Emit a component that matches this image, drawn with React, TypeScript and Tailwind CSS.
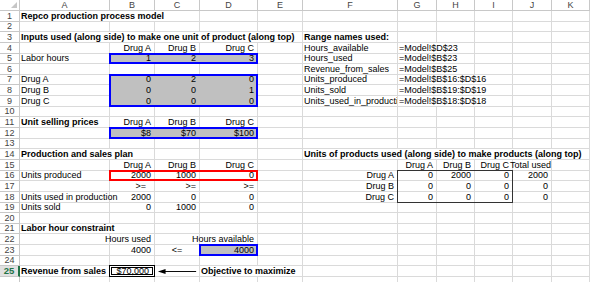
import type { ReactNode } from 'react'

type Cell = {
  t?: string
  a?: 'l' | 'r' | 'c'
  b?: boolean
  g?: boolean
  s?: number
  clip?: boolean
  pad?: string
  node?: ReactNode
}

const COLS = ['A', 'B', 'C', 'D', 'E', 'F', 'G', 'H', 'I', 'J', 'K']

const spanClass: Record<number, string> = {
  1: '',
  2: 'col-span-2',
  3: 'col-span-3',
  5: 'col-span-5',
  6: 'col-span-6',
}

const l = (t: string, s = 1): Cell => ({ t, s })
const r = (t: string): Cell => ({ t, a: 'r' })
const g = (t: string): Cell => ({ t, a: 'r', g: true })
const bold = (t: string, s = 1): Cell => ({ t, b: true, s })

const Arrow = () => (
  <svg width="45" height="11" viewBox="0 0 45 11">
    <line x1="7" y1="5.5" x2="42" y2="5.5" stroke="#000" strokeWidth="1" />
    <polygon points="2,5.5 10,3 10,8" fill="#000" />
  </svg>
)

const sheet: Record<number, Record<string, Cell>> = {
  1: { A: bold('Repco production process model', 3) },
  3: {
    A: bold('Inputs used (along side) to make one unit of product (along top)', 5),
    F: bold('Range names used:'),
  },
  4: { B: r('Drug A'), C: r('Drug B'), D: r('Drug C'), F: l('Hours_available'), G: l('=Model!$D$23', 2) },
  5: { A: l('Labor hours'), B: g('1'), C: g('2'), D: g('3'), F: l('Hours_used'), G: l('=Model!$B$23', 2) },
  6: { F: l('Revenue_from_sales'), G: l('=Model!$B$25', 2) },
  7: { A: l('Drug A'), B: g('0'), C: g('2'), D: g('0'), F: l('Units_produced'), G: l('=Model!$B$16:$D$16', 3) },
  8: { A: l('Drug B'), B: g('0'), C: g('0'), D: g('1'), F: l('Units_sold'), G: l('=Model!$B$19:$D$19', 3) },
  9: {
    A: l('Drug C'), B: g('0'), C: g('0'), D: g('0'),
    F: { t: 'Units_used_in_production', clip: true },
    G: l('=Model!$B$18:$D$18', 3),
  },
  11: { A: bold('Unit selling prices'), B: r('Drug A'), C: r('Drug B'), D: r('Drug C') },
  12: { B: g('$8'), C: g('$70'), D: g('$100') },
  14: {
    A: bold('Production and sales plan', 2),
    F: bold('Units of products used (along side) to make products (along top)', 6),
  },
  15: {
    B: r('Drug A'), C: r('Drug B'), D: r('Drug C'),
    G: r('Drug A'), H: r('Drug B'), I: r('Drug C'), J: { t: 'Total used', a: 'r', pad: 'pr-0' },
  },
  16: {
    A: l('Units produced'), B: r('2000'), C: r('1000'), D: r('0'),
    F: r('Drug A'), G: r('0'), H: r('2000'), I: r('0'), J: r('2000'),
  },
  17: {
    B: r('>=\u00a0\u00a0'), C: r('>='), D: r('>='),
    F: r('Drug B'), G: r('0'), H: r('0'), I: r('0'), J: r('0'),
  },
  18: {
    A: l('Units used in production'), B: r('2000'), C: r('0'), D: r('0'),
    F: r('Drug C'), G: r('0'), H: r('0'), I: r('0'), J: r('0'),
  },
  19: { A: l('Units sold'), B: r('0'), C: r('1000'), D: r('0') },
  21: { A: bold('Labor hour constraint', 2) },
  22: { B: r('Hours used'), D: r('Hours available') },
  23: { B: r('4000'), C: { t: '<=', a: 'c' }, D: g('4000') },
  25: {
    A: bold('Revenue from sales'),
    B: { t: '$70,000', a: 'r', pad: 'pr-[5px]' },
    C: { node: <Arrow /> },
    D: bold('Objective to maximize', 2),
  },
}

const ROWS = Array.from({ length: 26 }, (_, i) => i + 1)

const grid =
  'grid grid-cols-[20px_90px_45px_45px_58px_45px_95px_39px_38px_38px_39px_38px] grid-rows-[11px_11px_10px_11px_11px_10px_11px_10px_11px_11px_10px_11px_11px_10px_11px_11px_10px_11px_11px_10px_11px_10px_11px_11px_10px_11px_11px]'

function renderRow(n: number) {
  const data = sheet[n] ?? {}
  const out: ReactNode[] = []
  let skip = 0
  COLS.forEach((col) => {
    if (skip > 0) {
      skip--
      return
    }
    const c = data[col]
    const s = c?.s ?? 1
    skip = s - 1
    const align =
      c?.a === 'r'
        ? `justify-end ${c.pad ?? 'pr-[3px]'}`
        : c?.a === 'c'
          ? 'justify-center'
          : 'pl-px'
    out.push(
      <div
        key={`${col}${n}`}
        className={`flex items-center whitespace-nowrap border-r border-b leading-none ${spanClass[s]} ${
          c?.g ? 'bg-[#c0c0c0] border-[#c0c0c0]' : 'border-[#dadada]'
        } ${align} ${c?.b ? 'font-bold' : ''} ${c?.clip ? 'overflow-hidden' : ''}`}
      >
        {c?.node ?? c?.t}
      </div>
    )
  })
  return out
}

export default function App() {
  return (
    <div className="relative w-[590px] h-[282px] overflow-hidden bg-white text-[9px] text-black font-['Liberation_Sans',Arial,sans-serif]">
      <div className={grid}>
        {/* corner + column letters */}
        <div className="relative border-r border-b border-[#c8c8c8]">
          <svg className="absolute right-[2px] bottom-[2px]" width="6" height="6" viewBox="0 0 6 6">
            <polygon points="6,0 6,6 0,6" fill="#c6c6c6" />
          </svg>
        </div>
        {COLS.map((c) => (
          <div
            key={c}
            className="flex items-center justify-center border-r border-b border-[#c8c8c8] text-[#444] text-[9px] leading-none"
          >
            {c}
          </div>
        ))}

        {ROWS.map((n) => [
          <div
            key={`h${n}`}
            className={`flex items-center justify-center border-b leading-none ${
              n === 25
                ? 'bg-[#e1e1e1] text-[#217346] font-bold border-r-2 border-r-[#217346] border-b-[#c8c8c8] text-[9.5px]'
                : 'border-r border-[#c8c8c8] text-[#444] text-[9px]'
            }`}
          >
            {n < 26 ? n : ''}
          </div>,
          ...renderRow(n),
        ])}
      </div>

      {/* range outlines drawn over the cells */}
      <div className={`absolute left-0 top-0 w-full pointer-events-none ${grid}`}>
        <div className="col-start-3 col-end-6 row-start-6 row-end-7 -ml-px -mt-px border-2 border-[#0000ff]" />
        <div className="col-start-3 col-end-6 row-start-8 row-end-11 -ml-px -mt-px border-2 border-[#0000ff]" />
        <div className="col-start-3 col-end-6 row-start-13 row-end-14 -ml-px -mt-px border-2 border-[#0000ff]" />
        <div className="col-start-5 col-end-6 row-start-24 row-end-25 -ml-px -mt-px border-2 border-[#0000ff]" />
        <div className="col-start-3 col-end-6 row-start-17 row-end-18 -ml-px -mt-px border-2 border-[#ff0000]" />
        <div className="col-start-8 col-end-11 row-start-17 row-end-20 -ml-px -mt-px border border-[#333]" />
        <div className="col-start-3 col-end-4 row-start-26 row-end-27 -ml-px -mt-px border-[3px] border-double border-black" />
      </div>
    </div>
  )
}
